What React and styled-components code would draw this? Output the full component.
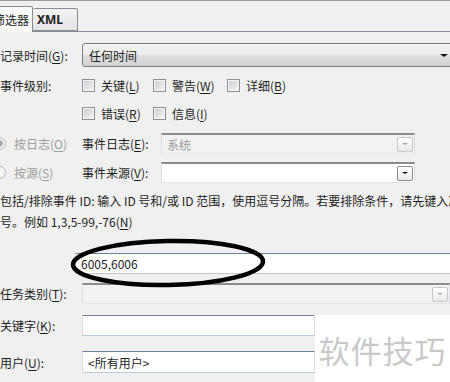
import styled, { createGlobalStyle } from "styled-components";

const GlobalStyle = createGlobalStyle`
  html, body {
    margin: 0;
    padding: 0;
    background: #f0f0f0;
    overflow: hidden;
  }
  body {
    font-family: "Noto Sans CJK SC", "Noto Sans", sans-serif;
    font-size: 12px;
    color: #1e1e1e;
  }
  u { text-underline-offset: 2px; }
`;

const Window = styled.div`
  position: relative;
  width: 450px;
  height: 382px;
  overflow: hidden;
  box-sizing: border-box;
  border-top: 1px solid #9c9c9c;
`;

const TabBar = styled.div`
  display: flex;
  align-items: flex-end;
  height: 30px;
  margin-left: -14px;
  border-bottom: 1px solid #898c95;
`;

const Tab = styled.div`
  box-sizing: border-box;
  display: flex;
  align-items: center;
  height: ${(p) => (p.$active ? "26px" : "23px")};
  margin-bottom: ${(p) => (p.$active ? "-1px" : "0")};
  padding: ${(p) => (p.$active ? "0 3px 0 6px" : "0 14px 0 4px")};
  border: 1px solid #898c95;
  border-bottom: ${(p) => (p.$active ? "none" : "1px solid #898c95")};
  border-left: ${(p) => (p.$active ? "1px solid #898c95" : "none")};
  border-radius: 2px 2px 0 0;
  background: ${(p) =>
    p.$active ? "#fbfbfb" : "linear-gradient(#f3f3f3, #e4e4e4)"};
  font-weight: ${(p) => (p.$active ? 400 : 700)};
  font-family: ${(p) =>
    p.$active ? "inherit" : `"Noto Sans", "Liberation Sans", sans-serif`};
`;

const Panel = styled.div`
  display: flex;
  flex-direction: column;
`;

const Row = styled.div`
  display: flex;
  align-items: center;
  height: ${(p) => p.$h}px;
  margin-top: ${(p) => p.$mt}px;
  padding-left: ${(p) => p.$indent || 0}px;
  white-space: nowrap;
`;

const Label = styled.div`
  width: ${(p) => p.$w || 82}px;
  flex-shrink: 0;
  color: ${(p) => (p.$disabled ? "#9d9d9d" : "#1e1e1e")};
  display: flex;
  align-items: center;
`;

const Combo = styled.div`
  box-sizing: border-box;
  flex: 1;
  height: 24px;
  margin-right: -4px;
  padding: 0 5px 0 6px;
  display: flex;
  align-items: center;
  justify-content: space-between;
  border: 1px solid #7b7b7b;
  border-radius: 3px;
  background: linear-gradient(#f3f3f3 0%, #ececec 48%, #dedede 52%, #d3d3d3 100%);
`;

const Arrow = styled.span`
  width: 0;
  height: 0;
  border-left: ${(p) => p.$size || 4}px solid transparent;
  border-right: ${(p) => p.$size || 4}px solid transparent;
  border-top: ${(p) => (p.$size || 4) - 0.5}px solid
    ${(p) => (p.$disabled ? "#a8a8a8" : "#111")};
`;

const CheckGrid = styled.div`
  display: grid;
  grid-template-columns: 71px 74px auto;
`;

const Check = styled.label`
  display: flex;
  align-items: center;
  gap: 6px;
`;

const Box = styled.span`
  box-sizing: border-box;
  width: 13px;
  height: 13px;
  border: 1px solid #8e8f8f;
  box-shadow: inset 0 0 0 1px #f6f6f6;
  background: linear-gradient(135deg, #c9cbcf, #f7f7f7);
`;

const Radio = styled.span`
  box-sizing: border-box;
  width: 13px;
  height: 13px;
  margin-left: -7px;
  margin-right: 8px;
  border-radius: 50%;
  border: 1px solid #b8b8b8;
  background: ${(p) =>
    p.$checked
      ? "radial-gradient(circle, #a9a9a9 0 3px, #f3f3f3 3.5px)"
      : "#f5f5f5"};
`;

const TextBox = styled.div`
  box-sizing: border-box;
  height: ${(p) => p.$h || 21}px;
  width: ${(p) => (p.$w ? `${p.$w}px` : "auto")};
  flex: ${(p) => (p.$w ? "none" : 1)};
  margin-right: ${(p) => p.$mr || 0}px;
  padding: 0 1px 0 5px;
  display: flex;
  align-items: center;
  justify-content: space-between;
  border: 1px solid #dcdde2;
  border-top: ${(p) =>
    p.$blue ? "1px solid #6b8197" : "2px solid #8b8b8b"};
  border-bottom-color: ${(p) => (p.$blue ? "#b9cbdb" : "#e6e6e6")};
  background: ${(p) => (p.$disabled ? "#f2f2f2" : "#fff")};
  color: ${(p) => (p.$disabled ? "#9a9a9a" : "#1e1e1e")};
`;

const DropButton = styled.span`
  box-sizing: border-box;
  width: 16px;
  height: 15px;
  display: flex;
  align-items: center;
  justify-content: center;
  border: 1px solid ${(p) => (p.$disabled ? "#c8c8c8" : "#8a8a8a")};
  border-radius: 2px;
  background: linear-gradient(#ffffff, #e9e9e9);
`;

const Paragraph = styled.div`
  margin-top: 7px;
  line-height: 21px;
  white-space: nowrap;
`;

const Watermark = styled.div`
  position: absolute;
  left: 315px;
  top: 314px;
  width: 135px;
  height: 68px;
  background: #ffffff;
  display: flex;
  align-items: center;
  justify-content: center;
  color: #c9c9c9;
  font-size: 31px;
  letter-spacing: 1px;
`;

const Annotation = styled.svg`
  position: absolute;
  left: 70px;
  top: 238px;
  overflow: visible;
`;

export default function App() {
  return (
    <>
      <GlobalStyle />
      <Window>
        <TabBar>
          <Tab $active>筛选器</Tab>
          <Tab>XML</Tab>
        </TabBar>
        <Panel>
          <Row $h={24} $mt={11}>
            <Label>
              <span>
                记录时间(<u>G</u>):
              </span>
            </Label>
            <Combo>
              <span>任何时间</span>
              <Arrow />
            </Combo>
          </Row>
          <Row $h={24} $mt={6}>
            <Label>事件级别:</Label>
            <CheckGrid>
              <Check>
                <Box />
                <span>
                  关键(<u>L</u>)
                </span>
              </Check>
              <Check>
                <Box />
                <span>
                  警告(<u>W</u>)
                </span>
              </Check>
              <Check>
                <Box />
                <span>
                  详细(<u>B</u>)
                </span>
              </Check>
            </CheckGrid>
          </Row>
          <Row $h={24} $mt={4} $indent={82}>
            <CheckGrid>
              <Check>
                <Box />
                <span>
                  错误(<u>R</u>)
                </span>
              </Check>
              <Check>
                <Box />
                <span>
                  信息(<u>I</u>)
                </span>
              </Check>
            </CheckGrid>
          </Row>
          <Row $h={21} $mt={8}>
            <Label $disabled>
              <Radio $checked />
              <span>
                按日志(<u>O</u>)
              </span>
            </Label>
            <Label $w={79}>
              <span>
                事件日志(<u>E</u>):
              </span>
            </Label>
            <TextBox $disabled $mr={35}>
              <span>系统</span>
              <DropButton $disabled>
                <Arrow $size={3} $disabled />
              </DropButton>
            </TextBox>
          </Row>
          <Row $h={21} $mt={8}>
            <Label $disabled>
              <Radio />
              <span>
                按源(<u>S</u>)
              </span>
            </Label>
            <Label $w={79}>
              <span>
                事件来源(<u>V</u>):
              </span>
            </Label>
            <TextBox $mr={35}>
              <span />
              <DropButton>
                <Arrow $size={3} />
              </DropButton>
            </TextBox>
          </Row>
          <Paragraph>
            <div>包括/排除事件 ID: 输入 ID 号和/或 ID 范围，使用逗号分隔。若要排除条件，请先键入减号。</div>
            <div>
              号。例如 1,3,5-99,-76(<u>N</u>)
            </div>
          </Paragraph>
          <Row $h={21} $mt={21} $indent={75}>
            <TextBox $blue $mr={-4}>
              <span>6005,6006</span>
            </TextBox>
          </Row>
          <Row $h={21} $mt={9}>
            <Label>
              <span>
                任务类别(<u>T</u>):
              </span>
            </Label>
            <TextBox $disabled $mr={0}>
              <span />
              <DropButton $disabled>
                <Arrow $size={3} $disabled />
              </DropButton>
            </TextBox>
          </Row>
          <Row $h={21} $mt={11}>
            <Label>
              <span>
                关键字(<u>K</u>):
              </span>
            </Label>
            <TextBox $w={233} $blue>
              <span />
            </TextBox>
          </Row>
          <Row $h={22} $mt={15}>
            <Label>
              <span>
                用户(<u>U</u>):
              </span>
            </Label>
            <TextBox $w={233} $h={22} $blue>
              <span>&lt;所有用户&gt;</span>
            </TextBox>
          </Row>
        </Panel>
        <Annotation width="196" height="48" viewBox="0 0 196 48">
          <ellipse
            cx="98"
            cy="24"
            rx="95"
            ry="22"
            fill="none"
            stroke="#000"
            strokeWidth="4.5"
            transform="rotate(-1 98 24)"
          />
        </Annotation>
        <Watermark>软件技巧</Watermark>
      </Window>
    </>
  );
}
